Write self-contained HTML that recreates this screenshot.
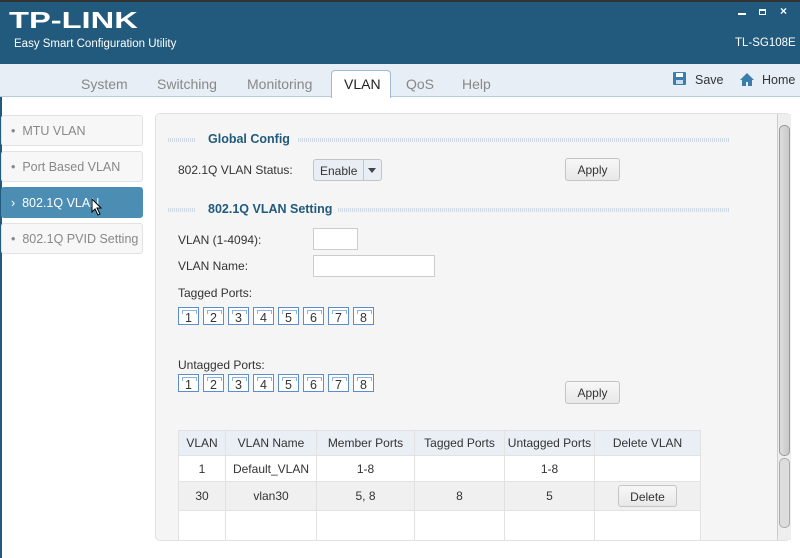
<!DOCTYPE html>
<html><head><meta charset="utf-8"><style>
*{box-sizing:border-box;margin:0;padding:0}
body{width:800px;height:558px;overflow:hidden;background:#fff;font-family:"Liberation Sans",sans-serif;font-size:12px;color:#333;position:relative}
.a{position:absolute}
.hdr{left:0;top:0;width:800px;height:64px;background:#215a7c;border-top:2px solid #333}
.logo{left:9px;top:7px;color:#fff;font-weight:bold;font-size:23px;transform:scaleX(1.42);transform-origin:left}
.tabs{left:0;top:64px;width:800px;height:33px;background:#e7eef5;border-bottom:1px solid #b7cbdc}
.tab{top:76px;font-size:14px;color:#888}
.side{left:1px;width:142px;height:31px;border:1px solid #e2e2e2;border-radius:3px;background:#f7f7f7;color:#888;font-size:12.5px;padding:8px 0 0 9px;white-space:nowrap;overflow:hidden}
.panel{left:155px;top:113px;width:636px;height:428px;background:#f5f5f5;border:1px solid #e0e0e0;border-radius:5px}
.sec{font-weight:bold;color:#215a7c;font-size:12.5px}
.dots{height:4px;background:repeating-linear-gradient(90deg,#cfd9e3 0 1px,transparent 1px 2px);}
.btn{border:1px solid #c4c4c4;border-radius:3px;background:linear-gradient(#f7f7f7,#e8e8e8);text-align:center;color:#333}
.inp{background:#fff;border:1px solid #ccc}
.port{width:21px;height:18px;border:1px solid #5b8ed0;background:#fff;font-size:12.5px;text-align:center;line-height:20px;color:#333}
.port::before{content:"";position:absolute;left:3px;top:2px;width:13px;height:3px;border:1px solid #8db1dd;border-bottom:none}
table{border-collapse:collapse;font-size:12px;text-align:center}
td{border:1px solid #e2e2e2;padding:0}
</style></head><body>
<div class="a hdr"></div>
<div class="a logo">TP-LINK</div>
<div class="a" style="left:14px;top:38px;color:#fff;font-size:11.5px">Easy Smart Configuration Utility</div>
<div class="a" style="left:738px;top:13px;width:8px;height:2px;background:#fff"></div>
<div class="a" style="left:759px;top:9px;width:7px;height:6px;border:1px solid #fff;border-top-width:2px"></div>
<div class="a" style="left:780px;top:4px;color:#fff;font-size:12px;font-weight:bold">×</div>
<div class="a" style="left:735px;top:37px;color:#fff;font-size:11.5px">TL-SG108E</div>
<div class="a tabs"></div>
<div class="a tab" style="left:81px">System</div>
<div class="a tab" style="left:157px">Switching</div>
<div class="a tab" style="left:247px">Monitoring</div>
<div class="a" style="left:331px;top:70px;width:60px;height:28px;background:#fff;border:1px solid #9dbbd3;border-bottom:none;border-radius:4px 4px 0 0"></div>
<div class="a tab" style="left:344px;color:#222">VLAN</div>
<div class="a tab" style="left:406px">QoS</div>
<div class="a tab" style="left:462px">Help</div>
<div class="a" style="left:673px;top:72px;width:13px;height:13px;background:#3b7eaa;border-radius:1px"><div class="a" style="left:3px;top:1px;width:7px;height:4px;background:#fff"></div><div class="a" style="left:3px;top:8px;width:7px;height:4px;background:#cde"></div></div>
<div class="a" style="left:695px;top:73px;font-size:12.5px">Save</div>
<svg class="a" style="left:739px;top:72px" width="16" height="15"><path d="M8 1L1 8h2v6h4v-4h2v4h4V8h2z" fill="#3b7eaa"/></svg>
<div class="a" style="left:762px;top:73px;font-size:12.5px">Home</div>
<div class="a" style="left:0;top:97px;width:2px;height:461px;background:#215a7c"></div>
<div class="a side" style="top:115px">•&nbsp; MTU VLAN</div>
<div class="a side" style="top:151px">•&nbsp; Port Based VLAN</div>
<div class="a side" style="top:187px;background:#4b8db3;border-color:#4b8db3;color:#fff">›&nbsp; 802.1Q VLAN</div>
<div class="a side" style="top:223px">•&nbsp; 802.1Q PVID Setting</div>
<svg class="a" style="left:91px;top:198px" width="12" height="18"><path d="M1 1v13l3-3 3 6 2-1-3-6h4z" fill="#fff" stroke="#000"/></svg>
<div class="a panel"></div>
<div class="a dots" style="left:168px;top:138px;width:28px"></div>
<div class="a sec" style="left:208px;top:132px">Global Config</div>
<div class="a dots" style="left:298px;top:138px;width:432px"></div>
<div class="a" style="left:178px;top:163px">802.1Q VLAN Status:</div>
<div class="a btn" style="left:313px;top:159px;width:69px;height:22px;background:#e8eef3;text-align:left;padding:4px 0 0 6px">Enable<div class="a" style="left:49px;top:0;width:1px;height:20px;background:#c4c4c4"></div><div class="a" style="left:54px;top:8px;border:4px solid transparent;border-top:5px solid #444"></div></div>
<div class="a btn" style="left:565px;top:158px;width:55px;height:23px;padding-top:4px">Apply</div>
<div class="a dots" style="left:168px;top:208px;width:28px"></div>
<div class="a sec" style="left:208px;top:202px">802.1Q VLAN Setting</div>
<div class="a dots" style="left:338px;top:208px;width:392px"></div>
<div class="a" style="left:178px;top:233px">VLAN (1-4094):</div>
<div class="a inp" style="left:313px;top:228px;width:45px;height:22px"></div>
<div class="a" style="left:178px;top:259px">VLAN Name:</div>
<div class="a inp" style="left:313px;top:255px;width:122px;height:22px"></div>
<div class="a" style="left:178px;top:286px">Tagged Ports:</div>
<div class="a" style="left:178px;top:358px">Untagged Ports:</div>
<div class="a port" style="left:178px;top:307px">1</div><div class="a port" style="left:203px;top:307px">2</div><div class="a port" style="left:228px;top:307px">3</div><div class="a port" style="left:253px;top:307px">4</div><div class="a port" style="left:278px;top:307px">5</div><div class="a port" style="left:303px;top:307px">6</div><div class="a port" style="left:328px;top:307px">7</div><div class="a port" style="left:353px;top:307px">8</div>
<div class="a port" style="left:178px;top:374px">1</div><div class="a port" style="left:203px;top:374px">2</div><div class="a port" style="left:228px;top:374px">3</div><div class="a port" style="left:253px;top:374px">4</div><div class="a port" style="left:278px;top:374px">5</div><div class="a port" style="left:303px;top:374px">6</div><div class="a port" style="left:328px;top:374px">7</div><div class="a port" style="left:353px;top:374px">8</div>
<div class="a btn" style="left:565px;top:381px;width:55px;height:23px;padding-top:4px">Apply</div>
<table class="a" style="left:178px;top:430px;width:523px">
<tr style="height:25px;background:#e9eff5"><td style="width:47px">VLAN</td><td style="width:91px">VLAN Name</td><td style="width:98px">Member Ports</td><td style="width:90px">Tagged Ports</td><td style="width:90px">Untagged Ports</td><td>Delete VLAN</td></tr>
<tr style="height:26px;background:#fff"><td>1</td><td>Default_VLAN</td><td>1-8</td><td></td><td>1-8</td><td></td></tr>
<tr style="height:29px;background:#f0f0f0"><td>30</td><td>vlan30</td><td>5, 8</td><td>8</td><td>5</td><td><div class="btn" style="width:59px;height:22px;margin:0 auto;padding-top:4px">Delete</div></td></tr>
<tr style="height:30px;background:#fff"><td></td><td></td><td></td><td></td><td></td><td></td></tr>
</table>
<div class="a" style="left:777px;top:114px;width:14px;height:426px;background:#eee;border-left:1px solid #ccc"></div>
<div class="a" style="left:779px;top:125px;width:11px;height:331px;background:linear-gradient(90deg,#ddd,#c8c8c8);border:1px solid #999;border-radius:5px"></div>
<div class="a" style="left:779px;top:458px;width:11px;height:70px;background:#ddd;border:1px solid #aaa;border-radius:5px"></div>
</body></html>
